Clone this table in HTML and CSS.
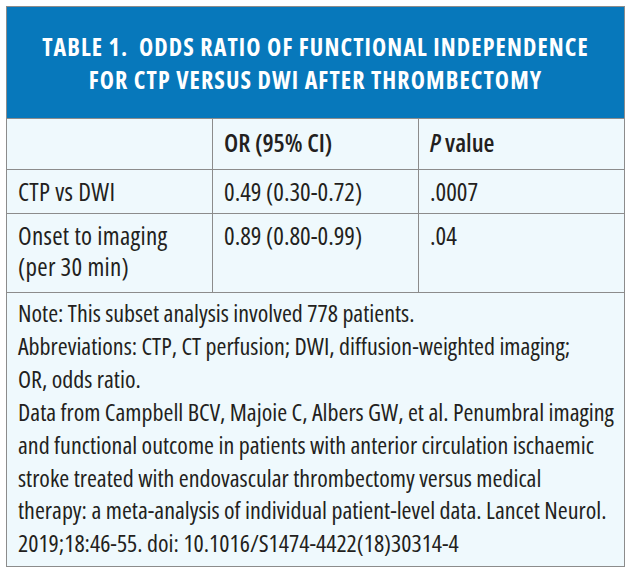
FILE: index.html
```html
<!DOCTYPE html>
<html lang="en">
<head>
<meta charset="utf-8">
<link rel="stylesheet" href="styles.css">
</head>
<body>
<div class="box">
  <div class="title">
    <div class="title-line">TABLE 1.&nbsp; ODDS RATIO OF FUNCTIONAL INDEPENDENCE</div>
    <div class="title-line">FOR CTP VERSUS DWI AFTER THROMBECTOMY</div>
  </div>
  <table class="data">
    <tr class="head">
      <td></td>
      <td>OR (95% CI)</td>
      <td><i>P</i> value</td>
    </tr>
    <tr class="r1">
      <td>CTP vs DWI</td>
      <td>0.49 (0.30-0.72)</td>
      <td>.0007</td>
    </tr>
    <tr class="r2">
      <td>Onset to imaging<br>(per 30 min)</td>
      <td>0.89 (0.80-0.99)</td>
      <td>.04</td>
    </tr>
  </table>
  <div class="notes">
    <p>Note: This subset analysis involved 778 patients.</p>
    <p>Abbreviations: CTP, CT perfusion; DWI, diffusion-weighted imaging;<br>OR, odds ratio.</p>
    <p>Data from Campbell BCV, Majoie C, Albers GW, et al. Penumbral imaging<br>and functional outcome in patients with anterior circulation ischaemic<br>stroke treated with endovascular thrombectomy versus medical<br>therapy: a meta-analysis of individual patient-level data. Lancet Neurol.<br>2019;18:46-55. doi: 10.1016/S1474-4422(18)30314-4</p>
  </div>
</div>
</body>
</html>
```
FILE: styles.css
```css
html, body {
  margin: 0;
  background: #ffffff;
}
body {
  padding: 6px;
  font-family: "Open Sans", "Roboto Condensed", sans-serif;
  font-stretch: 75%;
  color: #231f20;
}
.box {
  width: 617px;
  height: 559px;
  border: 1px solid #8c8c8c;
  background: #eff9fd;
  display: flex;
  flex-direction: column;
}
.title {
  background: #0778bb;
  color: #ffffff;
  box-sizing: border-box;
  height: 112px;
  display: flex;
  flex-direction: column;
  align-items: center;
  justify-content: center;
  text-align: center;
  font-weight: 700;
  font-size: 24px;
  line-height: 33px;
  letter-spacing: 1.1px;
  border-bottom: 1px solid #8c8c8c;
}
.data {
  border-collapse: collapse;
  table-layout: fixed;
  width: 617px;
  font-size: 25px;
  line-height: 31px;
}
.data td {
  width: 33.33%;
  border-right: 1px solid #8c8c8c;
  border-bottom: 1px solid #8c8c8c;
  padding: 6px 10px 6px 11px;
  vertical-align: top;
  white-space: nowrap;
}
.data td:last-child {
  border-right: none;
}
.head td {
  font-weight: 600;
  height: 36px;
  padding-top: 8px;
}
.r1 td { height: 31px; }
.r2 td { height: 66px; }
.r1 td:first-child, .r2 td:first-child {
  letter-spacing: 0.3px;
}
.notes {
  padding: 4px 11px;
  font-size: 24px;
  line-height: 32.9px;
  white-space: nowrap;
}
.notes p {
  margin: 0;
}
```
